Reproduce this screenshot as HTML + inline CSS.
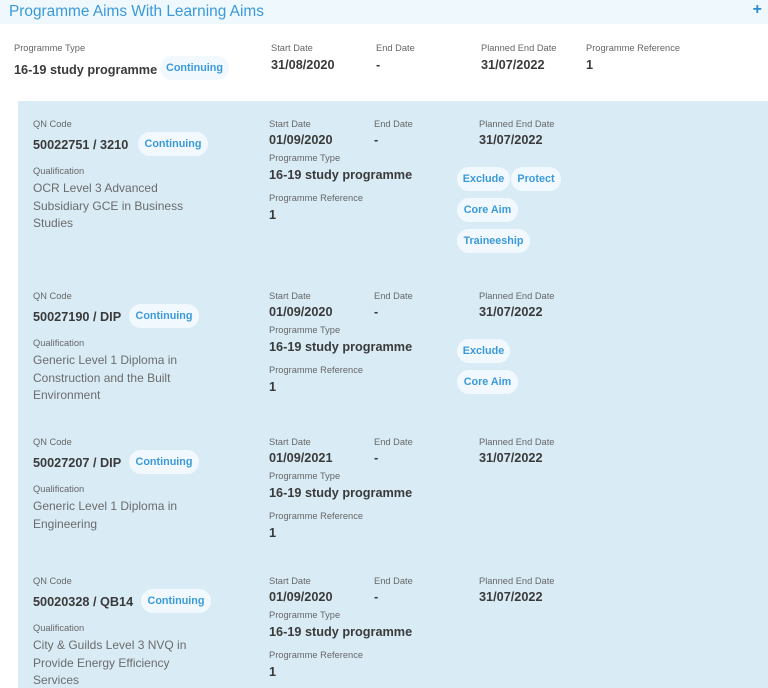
<!DOCTYPE html>
<html><head><meta charset="utf-8">
<style>
*{margin:0;padding:0;box-sizing:border-box}
html,body{width:768px;height:688px;overflow:hidden}
body{background:#fff;font-family:"Liberation Sans",Arial,sans-serif;position:relative;color:#333}
.a{position:absolute;white-space:nowrap}
.hdr{position:absolute;left:0;top:0;width:768px;height:24px;background:#eef8fd}
.ttl{left:9px;top:2px;font-size:15.4px;color:#3a9ad9;line-height:20px}
.plus{right:6px;top:0;font-size:16px;font-weight:bold;color:#2b8ad0;line-height:20px}
.panel{position:absolute;left:18px;top:101px;width:750px;height:600px;background:#d9ecf6}
.l{font-size:9.3px;color:#666;line-height:12px}
.v{font-size:12.7px;font-weight:bold;color:#3a3a3a;line-height:16px}
.q{font-size:12px;color:#6b6b6b;line-height:17.5px;white-space:normal;width:170px}
.p{height:24px;line-height:24px;border-radius:12px;background:#f2f9fe;color:#3a9ad9;font-size:10.8px;font-weight:bold;text-align:center}
</style></head><body>
<div class="hdr"></div>
<div class="a ttl">Programme Aims With Learning Aims</div>
<div class="a plus">+</div>

<div class="a l" style="left:14px;top:42px">Programme Type</div>
<div class="a v" style="left:14px;top:62px">16-19 study programme</div>
<div class="a p" style="left:160px;top:56px;width:69px">Continuing</div>
<div class="a l" style="left:271px;top:42px">Start Date</div>
<div class="a v" style="left:271px;top:57px">31/08/2020</div>
<div class="a l" style="left:376px;top:42px">End Date</div>
<div class="a v" style="left:376px;top:57px">-</div>
<div class="a l" style="left:481px;top:42px">Planned End Date</div>
<div class="a v" style="left:481px;top:57px">31/07/2022</div>
<div class="a l" style="left:586px;top:42px">Programme Reference</div>
<div class="a v" style="left:586px;top:57px">1</div>

<div class="panel"></div>

<!-- item 1 -->
<div class="a l" style="left:33px;top:118px">QN Code</div>
<div class="a v" style="left:33px;top:137px">50022751 / 3210</div>
<div class="a p" style="left:138px;top:132px;width:70px">Continuing</div>
<div class="a l" style="left:33px;top:165px">Qualification</div>
<div class="a q" style="left:33px;top:180px">OCR Level 3 Advanced Subsidiary GCE in Business Studies</div>
<div class="a l" style="left:269px;top:118px">Start Date</div>
<div class="a v" style="left:269px;top:132px">01/09/2020</div>
<div class="a l" style="left:374px;top:118px">End Date</div>
<div class="a v" style="left:374px;top:132px">-</div>
<div class="a l" style="left:479px;top:118px">Planned End Date</div>
<div class="a v" style="left:479px;top:132px">31/07/2022</div>
<div class="a l" style="left:269px;top:152px">Programme Type</div>
<div class="a v" style="left:269px;top:167px">16-19 study programme</div>
<div class="a l" style="left:269px;top:192px">Programme Reference</div>
<div class="a v" style="left:269px;top:207px">1</div>
<div class="a p" style="left:457px;top:167px;width:53px">Exclude</div>
<div class="a p" style="left:511px;top:167px;width:50px">Protect</div>
<div class="a p" style="left:457px;top:198px;width:61px">Core Aim</div>
<div class="a p" style="left:457px;top:229px;width:73px">Traineeship</div>

<!-- item 2 -->
<div class="a l" style="left:33px;top:290px">QN Code</div>
<div class="a v" style="left:33px;top:309px">50027190 / DIP</div>
<div class="a p" style="left:129px;top:304px;width:70px">Continuing</div>
<div class="a l" style="left:33px;top:337px">Qualification</div>
<div class="a q" style="left:33px;top:352px">Generic Level 1 Diploma in Construction and the Built Environment</div>
<div class="a l" style="left:269px;top:290px">Start Date</div>
<div class="a v" style="left:269px;top:304px">01/09/2020</div>
<div class="a l" style="left:374px;top:290px">End Date</div>
<div class="a v" style="left:374px;top:304px">-</div>
<div class="a l" style="left:479px;top:290px">Planned End Date</div>
<div class="a v" style="left:479px;top:304px">31/07/2022</div>
<div class="a l" style="left:269px;top:324px">Programme Type</div>
<div class="a v" style="left:269px;top:339px">16-19 study programme</div>
<div class="a l" style="left:269px;top:364px">Programme Reference</div>
<div class="a v" style="left:269px;top:379px">1</div>
<div class="a p" style="left:457px;top:339px;width:53px">Exclude</div>
<div class="a p" style="left:457px;top:370px;width:61px">Core Aim</div>

<!-- item 3 -->
<div class="a l" style="left:33px;top:436px">QN Code</div>
<div class="a v" style="left:33px;top:455px">50027207 / DIP</div>
<div class="a p" style="left:129px;top:450px;width:70px">Continuing</div>
<div class="a l" style="left:33px;top:483px">Qualification</div>
<div class="a q" style="left:33px;top:498px">Generic Level 1 Diploma in Engineering</div>
<div class="a l" style="left:269px;top:436px">Start Date</div>
<div class="a v" style="left:269px;top:450px">01/09/2021</div>
<div class="a l" style="left:374px;top:436px">End Date</div>
<div class="a v" style="left:374px;top:450px">-</div>
<div class="a l" style="left:479px;top:436px">Planned End Date</div>
<div class="a v" style="left:479px;top:450px">31/07/2022</div>
<div class="a l" style="left:269px;top:470px">Programme Type</div>
<div class="a v" style="left:269px;top:485px">16-19 study programme</div>
<div class="a l" style="left:269px;top:510px">Programme Reference</div>
<div class="a v" style="left:269px;top:525px">1</div>

<!-- item 4 -->
<div class="a l" style="left:33px;top:575px">QN Code</div>
<div class="a v" style="left:33px;top:594px">50020328 / QB14</div>
<div class="a p" style="left:141px;top:589px;width:70px">Continuing</div>
<div class="a l" style="left:33px;top:622px">Qualification</div>
<div class="a q" style="left:33px;top:637px">City &amp; Guilds Level 3 NVQ in Provide Energy Efficiency Services</div>
<div class="a l" style="left:269px;top:575px">Start Date</div>
<div class="a v" style="left:269px;top:589px">01/09/2020</div>
<div class="a l" style="left:374px;top:575px">End Date</div>
<div class="a v" style="left:374px;top:589px">-</div>
<div class="a l" style="left:479px;top:575px">Planned End Date</div>
<div class="a v" style="left:479px;top:589px">31/07/2022</div>
<div class="a l" style="left:269px;top:609px">Programme Type</div>
<div class="a v" style="left:269px;top:624px">16-19 study programme</div>
<div class="a l" style="left:269px;top:649px">Programme Reference</div>
<div class="a v" style="left:269px;top:664px">1</div>
</body></html>
